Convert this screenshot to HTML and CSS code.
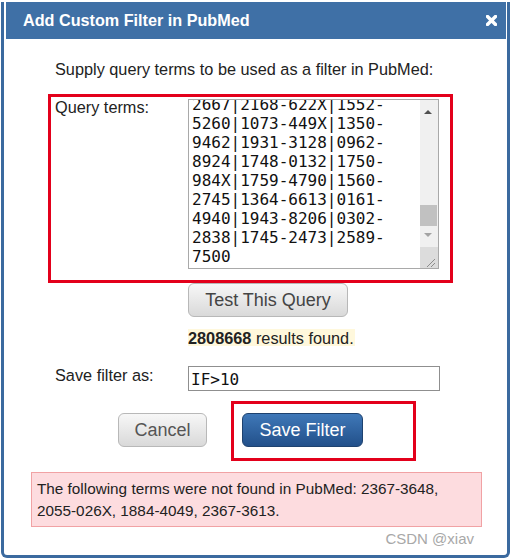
FILE: index.html
```html
<!DOCTYPE html>
<html lang="en">
<head>
    <meta charset="UTF-8">
    <title>Add Custom Filter in PubMed</title>
    <link rel="stylesheet" href="styles.css">
</head>
<body>
    <div class="dialog">
        <div class="dialog-header">
            <span class="dialog-title">Add Custom Filter in PubMed</span>
            <svg class="close-icon" width="11" height="11" viewBox="0 0 11 11">
                <path d="M1.5 1.5 L9.5 9.5 M9.5 1.5 L1.5 9.5" stroke="#fff" stroke-width="3.4" stroke-linecap="square"/>
            </svg>
        </div>

        <div class="dialog-body">
            <p class="intro">Supply query terms to be used as a filter in PubMed:</p>

            <div class="mark query-row">
                <label class="row-label">Query terms:</label>
                <div class="query-area">
                    <div class="query-text">2667|2168-622X|1552-<br>5260|1073-449X|1350-<br>9462|1931-3128|0962-<br>8924|1748-0132|1750-<br>984X|1759-4790|1560-<br>2745|1364-6613|0161-<br>4940|1943-8206|0302-<br>2838|1745-2473|2589-<br>7500</div>
                    <div class="scrollbar">
                        <div class="track">
                            <span class="arrow up"></span>
                            <span class="thumb"></span>
                            <span class="arrow down"></span>
                        </div>
                        <div class="grip">
                            <svg width="17" height="21" viewBox="0 0 17 21">
                                <path d="M15 12 L7 20 M15 16 L11 20" stroke="#8c8c8c" stroke-width="1"/>
                            </svg>
                        </div>
                    </div>
                </div>
            </div>

            <div class="indent">
                <button class="btn btn-grey btn-test">Test This Query</button>
            </div>
            <div class="indent results">
                <span class="results-text"><b>2808668</b> results found.</span>
            </div>

            <div class="save-row">
                <label class="row-label">Save filter as:</label>
                <input class="filter-name" type="text" value="IF&gt;10">
            </div>

            <div class="actions">
                <button class="btn btn-grey btn-cancel">Cancel</button>
                <div class="mark save-mark">
                    <button class="btn btn-blue">Save Filter</button>
                </div>
            </div>

            <div class="error-box">The following terms were not found in PubMed: <span class="term">2367-3648,</span> <span class="term">2055-026X,</span> <span class="term">1884-4049,</span> <span class="term">2367-3613.</span></div>

            <div class="watermark">CSDN @xiav</div>
        </div>
    </div>
</body>
</html>
```

FILE: styles.css
```css
body {
    margin: 0;
    background-color: #ffffff;
    font-family: 'Liberation Sans', Arial, sans-serif;
    color: #222;
}
.dialog {
    box-sizing: border-box;
    width: 509px;
    height: 556px;
    margin-left: 1px;
    border: 3px solid #3b6a9f;
    border-top: none;
    border-radius: 0 0 6px 6px;
    background-color: #fff;
}
.dialog-header {
    display: flex;
    align-items: center;
    justify-content: space-between;
    height: 37px;
    margin: 2px 1px 0 2px;
    padding: 0 9px 0 17px;
    background-color: #3f70a6;
}
.dialog-title {
    color: #fff;
    font-weight: bold;
    font-size: 16.2px;
}
.close-icon {
    display: block;
}
.dialog-body {
    padding: 0 25px 0 27px;
}
.intro {
    margin: 21px 0 0 24px;
    font-size: 16.3px;
    line-height: 18px;
}
.mark {
    border: 3px solid #e3001b;
}
.query-row {
    display: grid;
    grid-template-columns: 133px 251px;
    align-items: start;
    width: 395px;
    margin: 16px 0 0 17px;
    padding: 0 0 11px 4px;
}
.row-label {
    font-size: 16.3px;
    line-height: 18px;
    padding-top: 1px;
}
.query-area {
    display: flex;
    box-sizing: border-box;
    height: 170px;
    margin-top: 2px;
    border: 1px solid #a9a9a9;
    overflow: hidden;
}
.query-text {
    flex: 1;
    margin-top: -5px;
    padding-left: 3px;
    font-family: 'DejaVu Sans Mono', monospace;
    font-size: 16px;
    line-height: 19px;
    color: #111;
}
.scrollbar {
    display: flex;
    flex-direction: column;
    width: 18px;
    background-color: #f0f0f0;
}
.track {
    position: relative;
    flex: 1;
}
.arrow {
    position: absolute;
    left: 4px;
    width: 0;
    height: 0;
    border-left: 4px solid transparent;
    border-right: 4px solid transparent;
}
.arrow.up {
    top: 10px;
    border-bottom: 4px solid #505050;
}
.arrow.down {
    top: 133px;
    border-top: 4px solid #a3a3a3;
}
.thumb {
    position: absolute;
    top: 105px;
    left: 0;
    width: 17px;
    height: 21px;
    background-color: #c1c1c1;
}
.grip {
    height: 21px;
    background-color: #dcdcdc;
}
.grip svg {
    display: block;
}
.indent {
    margin-left: 157px;
}
.btn {
    font-family: 'Liberation Sans', Arial, sans-serif;
    border-radius: 6px;
    cursor: pointer;
    padding: 0;
}
.btn-grey {
    border: 1px solid #b8b8b8;
    background: linear-gradient(#f7f7f7, #d9d9d9);
    color: #444;
    font-size: 18px;
}
.btn-test {
    display: block;
    width: 160px;
    height: 34px;
}
.results {
    margin-top: 12px;
}
.results-text {
    display: inline-block;
    background-color: #fff8dc;
    font-size: 16.3px;
    line-height: 17px;
    padding: 1px 1px 0 0;
    height: 17px;
    box-sizing: border-box;
}
.save-row {
    display: grid;
    grid-template-columns: 133px 252px;
    align-items: start;
    margin: 18px 0 0 24px;
}
.save-row .row-label {
    padding-top: 0;
}
.filter-name {
    box-sizing: border-box;
    width: 252px;
    height: 25px;
    margin: 0;
    padding: 1px 2px 0;
    border: 1px solid #8f8f8f;
    font-family: 'DejaVu Sans Mono', monospace;
    font-size: 16px;
    color: #111;
}
.actions {
    display: flex;
    align-items: flex-start;
    margin: 10px 0 0 87px;
}
.btn-cancel {
    width: 89px;
    height: 34px;
    margin-top: 12px;
    color: #555;
}
.save-mark {
    box-sizing: border-box;
    width: 185px;
    height: 60px;
    margin-left: 24px;
    padding: 9px 0 0 8px;
}
.btn-blue {
    width: 121px;
    height: 34px;
    border: 1px solid #1e426f;
    background: linear-gradient(#3f78b8, #22508a);
    color: #fff;
    font-size: 18px;
}
.error-box {
    margin-top: 11px;
    width: 440px;
    padding: 5px 4px 4px 5px;
    border: 1px solid #f1a2a4;
    background-color: #fddcdf;
    font-size: 15.3px;
    line-height: 22px;
}
.term {
    white-space: nowrap;
}
.watermark {
    margin: 2px 8px 0 0;
    text-align: right;
    color: #a8a8a8;
    font-size: 15px;
    line-height: 20px;
}
```
